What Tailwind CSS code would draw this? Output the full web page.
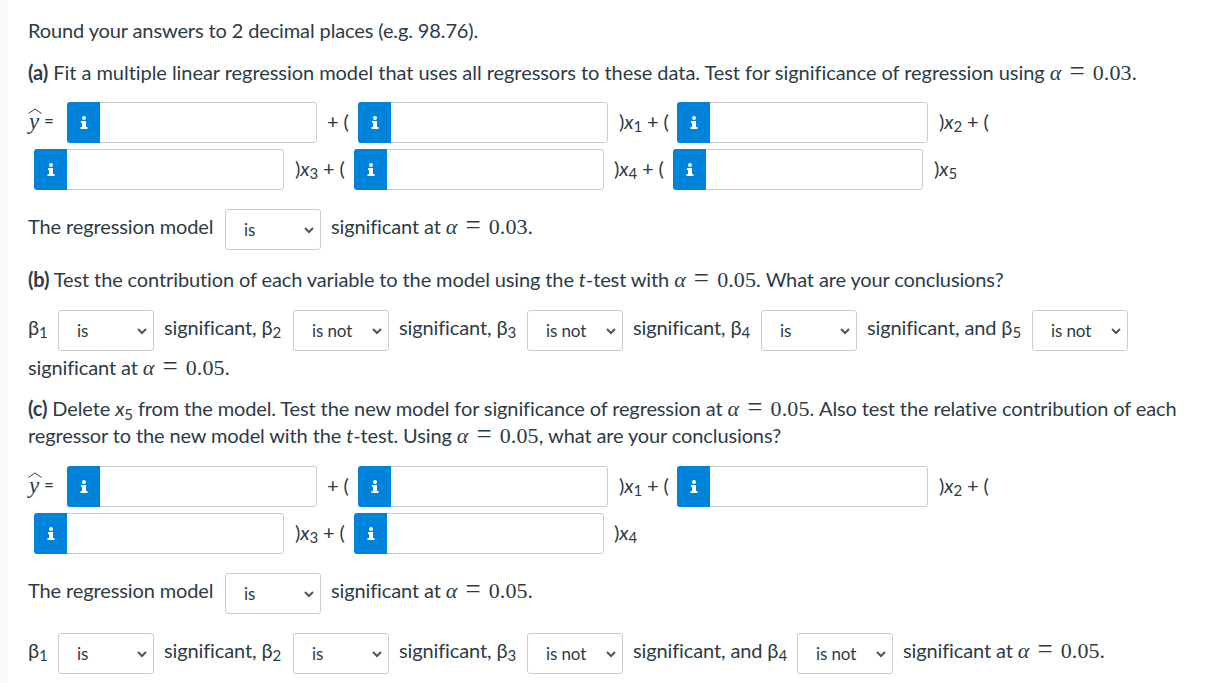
<!DOCTYPE html>
<html lang="en">
  <head>
    <meta charset="UTF-8" />
    <script src="https://cdn.jsdelivr.net/npm/@tailwindcss/browser@4"></script>
    <title>Regression</title>
  </head>
  <body class="bg-white overflow-hidden">
    <svg class="hidden">
      <symbol id="info" viewBox="0 0 8 13"><circle cx="4" cy="2" r="2" fill="#fff"/><path d="M1 5h5v6h1.5v2H.5v-2H2V7H1z" fill="#fff"/></symbol>
      <symbol id="chev" viewBox="0 0 10 8"><path d="M1 2l4 4 4-4" fill="none" stroke="#555" stroke-width="2"/></symbol>
      <symbol id="hat" viewBox="0 0 14 6"><path d="M.5 5.500L7 1l6.500 4.500" fill="none" stroke="#2d3b45" stroke-width="1"/></symbol>
    </svg>
    <div class="flex h-[683px] w-[1211px] overflow-hidden font-['Lato',sans-serif] text-[20px] text-[#2d3b45] tracking-[-0.12px]">
      <div class="w-2 shrink-0 bg-[#f9f9f9]"></div>
      <main class="flex-1 pl-5">
        <p class="mt-[18px] h-[26px] leading-[24px] whitespace-nowrap">Round your answers to 2 decimal places (e.g. 98.76).</p>

        <p class="mt-[14px] h-[26px] leading-[24px] whitespace-nowrap tracking-[-0.05px]"><b>(a)</b> Fit a multiple linear regression model that uses all regressors to these data. Test for significance of regression using <span class="font-['Liberation_Serif',serif] text-[22px] leading-none tracking-[0.1px]"><i>α</i><span class="mx-[8px] text-[27px] leading-none">=</span>0.03.</span></p>

        <!-- first equation -->
        <div class="mt-[18px] flex h-[41px] items-center whitespace-nowrap">
          <span class="flex w-[39px] items-center gap-[5px]"><span class="relative ml-[1px] font-['Liberation_Serif',serif] text-[23px] italic">y<svg class="absolute top-[3px] -left-[1px] h-[6px] w-[14px]"><use href="#hat"/></svg></span><span class="pb-1 text-[17px]">=</span></span>
          <div class="flex h-[41px] w-[250px] rounded-[3px] border border-[#c7cdd1]">
            <span class="-my-px -ml-px flex w-[33px] items-center justify-center rounded-l-[3px] bg-[#0083db]"><svg class="h-[13px] w-2"><use href="#info"/></svg></span>
          </div>
          <span class="ml-[10px] w-[31px] pb-1">+ (</span>
          <div class="flex h-[41px] w-[250px] rounded-[3px] border border-[#c7cdd1]">
            <span class="-my-px -ml-px flex w-[33px] items-center justify-center rounded-l-[3px] bg-[#0083db]"><svg class="h-[13px] w-2"><use href="#info"/></svg></span>
          </div>
          <span class="ml-[11px] w-[58px] pb-1">)<i>x</i><sub>1</sub> + (</span>
          <div class="flex h-[41px] w-[251px] rounded-[3px] border border-[#c7cdd1]">
            <span class="-my-px -ml-px flex w-[33px] items-center justify-center rounded-l-[3px] bg-[#0083db]"><svg class="h-[13px] w-2"><use href="#info"/></svg></span>
          </div>
          <span class="ml-[11px] pb-1">)<i>x</i><sub>2</sub> + (</span>
        </div>
        <div class="mt-[6px] flex h-[41px] items-center whitespace-nowrap">
          <div class="ml-[6px] flex h-[41px] w-[250px] rounded-[3px] border border-[#c7cdd1]">
            <span class="-my-px -ml-px flex w-[33px] items-center justify-center rounded-l-[3px] bg-[#0083db]"><svg class="h-[13px] w-2"><use href="#info"/></svg></span>
          </div>
          <span class="ml-[11px] w-[59px] pb-1">)<i>x</i><sub>3</sub> + (</span>
          <div class="flex h-[41px] w-[250px] rounded-[3px] border border-[#c7cdd1]">
            <span class="-my-px -ml-px flex w-[33px] items-center justify-center rounded-l-[3px] bg-[#0083db]"><svg class="h-[13px] w-2"><use href="#info"/></svg></span>
          </div>
          <span class="ml-[10px] w-[59px] pb-1">)<i>x</i><sub>4</sub> + (</span>
          <div class="flex h-[41px] w-[250px] rounded-[3px] border border-[#c7cdd1]">
            <span class="-my-px -ml-px flex w-[33px] items-center justify-center rounded-l-[3px] bg-[#0083db]"><svg class="h-[13px] w-2"><use href="#info"/></svg></span>
          </div>
          <span class="ml-[11px] pb-1">)<i>x</i><sub>5</sub></span>
        </div>

        <div class="mt-[19px] flex h-[41px] items-center whitespace-nowrap">
          <span class="w-[197px] pb-2">The regression model</span>
          <div class="flex h-[41px] w-[96px] items-center justify-between rounded-[3px] border border-[#c7cdd1] pl-[18px] pr-[6px] text-[17px]">is<svg class="h-2 w-[10px]"><use href="#chev"/></svg></div>
          <span class="ml-[10px] pb-2">significant at <span class="font-['Liberation_Serif',serif] text-[22px] leading-none tracking-[0.1px]"><i>α</i><span class="mx-[8px] text-[27px] leading-none">=</span>0.03.</span></span>
        </div>

        <p class="mt-[15px] h-[26px] leading-[24px] whitespace-nowrap"><b>(b)</b> Test the contribution of each variable to the model using the <i>t</i>-test with <span class="font-['Liberation_Serif',serif] text-[22px] leading-none tracking-[0.1px]"><i>α</i><span class="mx-[8px] text-[27px] leading-none">=</span>0.05</span>. What are your conclusions?</p>

        <div class="mt-[19px] flex h-[41px] items-center whitespace-nowrap">
          <span class="w-[30px] pb-2">β<sub>1</sub></span>
          <div class="flex h-[41px] w-[96px] items-center justify-between rounded-[3px] border border-[#c7cdd1] pl-[18px] pr-[6px] text-[17px]">is<svg class="h-2 w-[10px]"><use href="#chev"/></svg></div>
          <span class="ml-[10px] w-[129px] pb-2">significant, β<sub>2</sub></span>
          <div class="flex h-[41px] w-[96px] items-center justify-between rounded-[3px] border border-[#c7cdd1] pl-[18px] pr-[6px] text-[17px]">is not<svg class="h-2 w-[10px]"><use href="#chev"/></svg></div>
          <span class="ml-[10px] w-[128px] pb-2">significant, β<sub>3</sub></span>
          <div class="flex h-[41px] w-[96px] items-center justify-between rounded-[3px] border border-[#c7cdd1] pl-[18px] pr-[6px] text-[17px]">is not<svg class="h-2 w-[10px]"><use href="#chev"/></svg></div>
          <span class="ml-[10px] w-[128px] pb-2">significant, β<sub>4</sub></span>
          <div class="flex h-[41px] w-[96px] items-center justify-between rounded-[3px] border border-[#c7cdd1] pl-[18px] pr-[6px] text-[17px]">is<svg class="h-2 w-[10px]"><use href="#chev"/></svg></div>
          <span class="ml-[10px] w-[165px] pb-2">significant, and β<sub>5</sub></span>
          <div class="flex h-[41px] w-[96px] items-center justify-between rounded-[3px] border border-[#c7cdd1] pl-[18px] pr-[6px] text-[17px]">is not<svg class="h-2 w-[10px]"><use href="#chev"/></svg></div>
        </div>
        <p class="mt-[2px] h-[26px] leading-[24px] whitespace-nowrap">significant at <span class="font-['Liberation_Serif',serif] text-[22px] leading-none tracking-[0.1px]"><i>α</i><span class="mx-[8px] text-[27px] leading-none">=</span>0.05.</span></p>

        <p class="mt-[15px] h-[26px] leading-[24px] whitespace-nowrap"><b>(c)</b> Delete <i>x</i><sub>5</sub> from the model. Test the new model for significance of regression at <span class="font-['Liberation_Serif',serif] text-[22px] leading-none tracking-[0.1px]"><i>α</i><span class="mx-[8px] text-[27px] leading-none">=</span>0.05</span>. Also test the relative contribution of each</p>
        <p class="mt-[1px] h-[26px] leading-[24px] whitespace-nowrap">regressor to the new model with the <i>t</i>-test. Using <span class="font-['Liberation_Serif',serif] text-[22px] leading-none tracking-[0.1px]"><i>α</i><span class="mx-[8px] text-[27px] leading-none">=</span>0.05</span>, what are your conclusions?</p>

        <!-- second equation -->
        <div class="mt-[19px] flex h-[41px] items-center whitespace-nowrap">
          <span class="flex w-[39px] items-center gap-[5px]"><span class="relative ml-[1px] font-['Liberation_Serif',serif] text-[23px] italic">y<svg class="absolute top-[3px] -left-[1px] h-[6px] w-[14px]"><use href="#hat"/></svg></span><span class="pb-1 text-[17px]">=</span></span>
          <div class="flex h-[41px] w-[250px] rounded-[3px] border border-[#c7cdd1]">
            <span class="-my-px -ml-px flex w-[33px] items-center justify-center rounded-l-[3px] bg-[#0083db]"><svg class="h-[13px] w-2"><use href="#info"/></svg></span>
          </div>
          <span class="ml-[10px] w-[31px] pb-1">+ (</span>
          <div class="flex h-[41px] w-[250px] rounded-[3px] border border-[#c7cdd1]">
            <span class="-my-px -ml-px flex w-[33px] items-center justify-center rounded-l-[3px] bg-[#0083db]"><svg class="h-[13px] w-2"><use href="#info"/></svg></span>
          </div>
          <span class="ml-[11px] w-[58px] pb-1">)<i>x</i><sub>1</sub> + (</span>
          <div class="flex h-[41px] w-[251px] rounded-[3px] border border-[#c7cdd1]">
            <span class="-my-px -ml-px flex w-[33px] items-center justify-center rounded-l-[3px] bg-[#0083db]"><svg class="h-[13px] w-2"><use href="#info"/></svg></span>
          </div>
          <span class="ml-[11px] pb-1">)<i>x</i><sub>2</sub> + (</span>
        </div>
        <div class="mt-[6px] flex h-[41px] items-center whitespace-nowrap">
          <div class="ml-[6px] flex h-[41px] w-[250px] rounded-[3px] border border-[#c7cdd1]">
            <span class="-my-px -ml-px flex w-[33px] items-center justify-center rounded-l-[3px] bg-[#0083db]"><svg class="h-[13px] w-2"><use href="#info"/></svg></span>
          </div>
          <span class="ml-[11px] w-[59px] pb-1">)<i>x</i><sub>3</sub> + (</span>
          <div class="flex h-[41px] w-[250px] rounded-[3px] border border-[#c7cdd1]">
            <span class="-my-px -ml-px flex w-[33px] items-center justify-center rounded-l-[3px] bg-[#0083db]"><svg class="h-[13px] w-2"><use href="#info"/></svg></span>
          </div>
          <span class="ml-[10px] pb-1">)<i>x</i><sub>4</sub></span>
        </div>

        <div class="mt-[19px] flex h-[41px] items-center whitespace-nowrap">
          <span class="w-[197px] pb-2">The regression model</span>
          <div class="flex h-[41px] w-[96px] items-center justify-between rounded-[3px] border border-[#c7cdd1] pl-[18px] pr-[6px] text-[17px]">is<svg class="h-2 w-[10px]"><use href="#chev"/></svg></div>
          <span class="ml-[10px] pb-2">significant at <span class="font-['Liberation_Serif',serif] text-[22px] leading-none tracking-[0.1px]"><i>α</i><span class="mx-[8px] text-[27px] leading-none">=</span>0.05.</span></span>
        </div>

        <div class="mt-[19px] flex h-[41px] items-center whitespace-nowrap">
          <span class="w-[30px] pb-2">β<sub>1</sub></span>
          <div class="flex h-[41px] w-[96px] items-center justify-between rounded-[3px] border border-[#c7cdd1] pl-[18px] pr-[6px] text-[17px]">is<svg class="h-2 w-[10px]"><use href="#chev"/></svg></div>
          <span class="ml-[10px] w-[129px] pb-2">significant, β<sub>2</sub></span>
          <div class="flex h-[41px] w-[96px] items-center justify-between rounded-[3px] border border-[#c7cdd1] pl-[18px] pr-[6px] text-[17px]">is<svg class="h-2 w-[10px]"><use href="#chev"/></svg></div>
          <span class="ml-[10px] w-[128px] pb-2">significant, β<sub>3</sub></span>
          <div class="flex h-[41px] w-[96px] items-center justify-between rounded-[3px] border border-[#c7cdd1] pl-[18px] pr-[6px] text-[17px]">is not<svg class="h-2 w-[10px]"><use href="#chev"/></svg></div>
          <span class="ml-[10px] w-[164px] pb-2">significant, and β<sub>4</sub></span>
          <div class="flex h-[41px] w-[96px] items-center justify-between rounded-[3px] border border-[#c7cdd1] pl-[18px] pr-[6px] text-[17px]">is not<svg class="h-2 w-[10px]"><use href="#chev"/></svg></div>
          <span class="ml-[10px] pb-2">significant at <span class="font-['Liberation_Serif',serif] text-[22px] leading-none tracking-[0.1px]"><i>α</i><span class="mx-[8px] text-[27px] leading-none">=</span>0.05.</span></span>
        </div>
      </main>
    </div>
  </body>
</html>
